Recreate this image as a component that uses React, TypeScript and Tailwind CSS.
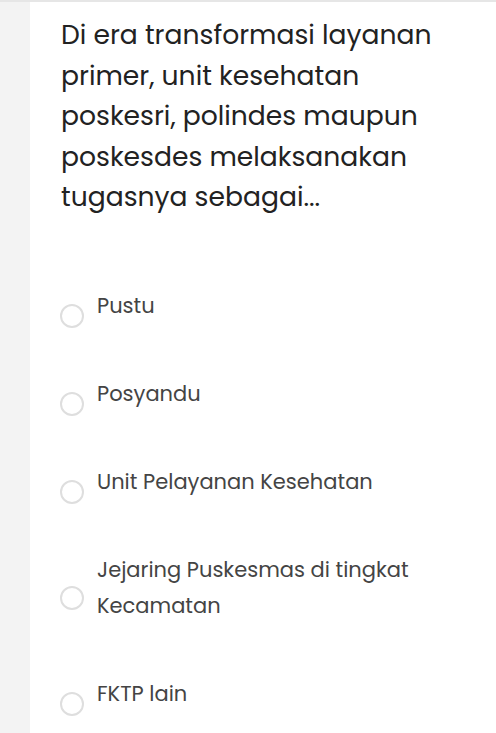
// Quiz question card — soal pilihan ganda dengan radio bulat

const OPTIONS = [
  'Pustu',
  'Posyandu',
  'Unit Pelayanan Kesehatan',
  'Jejaring Puskesmas di tingkat Kecamatan',
  'FKTP lain',
]

function RadioOption({ label }: { label: string }) {
  return (
    <label className="flex items-center gap-[13px] cursor-pointer">
      <span className="translate-y-[10px] w-6 h-6 shrink-0 rounded-full border-2 border-[#dedede] bg-white" />
      <span className="text-[21px] leading-[36px] text-[#444444] max-w-[340px]">{label}</span>
    </label>
  )
}

export default function App() {
  return (
    <div
      className="min-h-[733px] flex bg-[#f3f3f3] border-t-2 border-[#e6e6e6]"
      style={{ fontFamily: 'Poppins, "Open Sans", sans-serif' }}
    >
      <div className="w-[30px] shrink-0" />
      <div className="flex-1 bg-white pl-[30px] pr-4 pt-[13px]">
        {/* pertanyaan */}
        <p className="text-[26.6px] leading-[40.5px] text-[#222222] max-w-[400px] pl-px">
          Di era transformasi layanan primer, unit kesehatan poskesri, polindes maupun poskesdes melaksanakan tugasnya sebagai...
        </p>

        {/* pilihan jawaban */}
        <div className="mt-[70px] flex flex-col gap-[52px]">
          {OPTIONS.map(o => (
            <RadioOption key={o} label={o} />
          ))}
        </div>
      </div>
    </div>
  )
}
